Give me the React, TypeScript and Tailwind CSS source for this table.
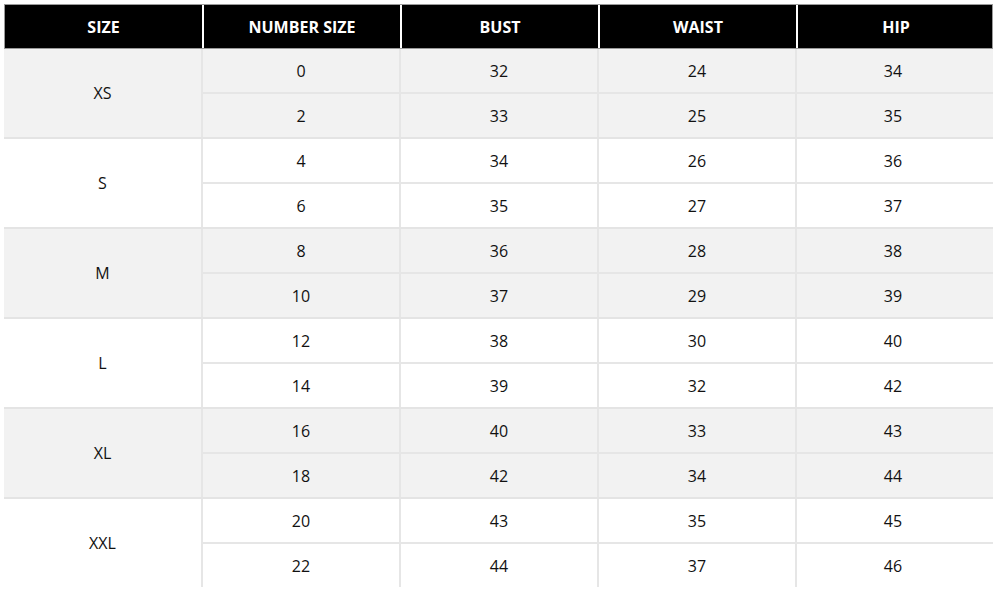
import React from "react";

const groups = [
  { size: "XS", shade: true, rows: [["0", "32", "24", "34"], ["2", "33", "25", "35"]] },
  { size: "S", shade: false, rows: [["4", "34", "26", "36"], ["6", "35", "27", "37"]] },
  { size: "M", shade: true, rows: [["8", "36", "28", "38"], ["10", "37", "29", "39"]] },
  { size: "L", shade: false, rows: [["12", "38", "30", "40"], ["14", "39", "32", "42"]] },
  { size: "XL", shade: true, rows: [["16", "40", "33", "43"], ["18", "42", "34", "44"]] },
  { size: "XXL", shade: false, rows: [["20", "43", "35", "45"], ["22", "44", "37", "46"]] },
];

const headers = ["SIZE", "NUMBER SIZE", "BUST", "WAIST", "HIP"];

export default function App() {
  return (
    <div
      className="w-[1000px] h-[599px] bg-white pt-1 pl-1 overflow-hidden text-[#111] text-[16px]"
      style={{ fontFamily: "'Open Sans', Lato, sans-serif" }}
    >
      <div className="w-[989px]">
        <div className="grid grid-cols-[197px_198px_198px_198px_198px] h-[45px] bg-black border border-[#9a9a9a]">
          {headers.map((h, i) => (
            <div
              key={h}
              className={`flex items-center justify-center text-white font-bold ${i > 0 ? "border-l-2 border-white" : ""}`}
            >
              {h}
            </div>
          ))}
        </div>
        {groups.map((g, gi) => (
          <div
            key={g.size}
            className={`flex ${g.shade ? "bg-[#f2f2f2]" : "bg-white"} ${gi < groups.length - 1 ? "border-b-2 border-[#e4e4e4]" : ""}`}
          >
            <div className="w-[197px] flex items-center justify-center">{g.size}</div>
            <div className="flex-1 flex flex-col">
              {g.rows.map((r, ri) => (
                <div
                  key={ri}
                  className={`grid grid-cols-[198px_198px_198px_194px] ${ri === 0 ? "h-[45px] border-b-2 border-[#e6e6e6]" : "h-[43px]"}`}
                >
                  {r.map((v, ci) => (
                    <div
                      key={ci}
                      className="flex items-center justify-center border-l-2 border-[#e6e6e6]"
                    >
                      {v}
                    </div>
                  ))}
                </div>
              ))}
            </div>
          </div>
        ))}
      </div>
    </div>
  );
}
